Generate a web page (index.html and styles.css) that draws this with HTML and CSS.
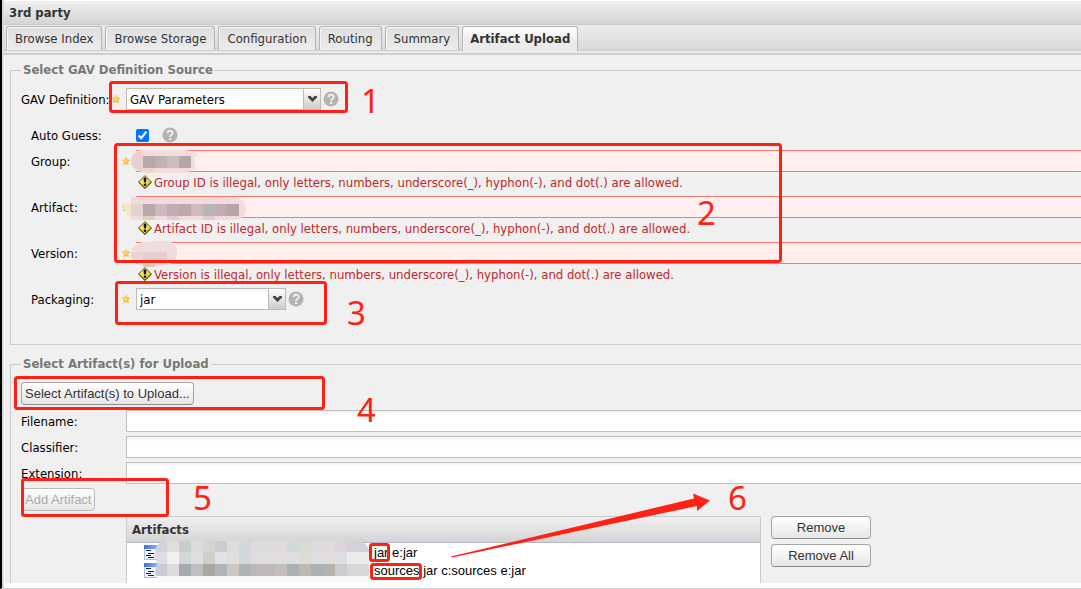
FILE: index.html
```html
<!DOCTYPE html>
<html lang="en">
<head>
<meta charset="utf-8">
<title>3rd party</title>
<link rel="stylesheet" href="styles.css">
</head>
<body>
<svg class="defs" width="0" height="0" aria-hidden="true">
  <defs>
    <linearGradient id="gold" x1="0" y1="0" x2="1" y2="1"><stop offset="0" stop-color="#fbd96b"/><stop offset="1" stop-color="#eeb028"/></linearGradient>
    <linearGradient id="yellow" x1="0" y1="0" x2="1" y2="1"><stop offset="0" stop-color="#fffbb0"/><stop offset="1" stop-color="#d8b800"/></linearGradient>
    <linearGradient id="blue" x1="0" y1="0" x2="1" y2="0"><stop offset="0" stop-color="#3c6fe0"/><stop offset="1" stop-color="#8fb4f5"/></linearGradient>
    <symbol id="star" viewBox="0 0 8 8"><path d="M4 0 5.2 2.6 8 3 6 5 6.5 8 4 6.6 1.5 8 2 5 0 3 2.8 2.6Z" fill="url(#gold)" stroke="#f0b840" stroke-width=".4"/><path d="M4 2.2 4.7 3.7 6 4 4.8 5 4 5.4 3.2 5 2 4 3.3 3.7Z" fill="#fde58a"/></symbol>
    <symbol id="help" viewBox="0 0 16 16"><circle cx="8" cy="8" r="7.5" fill="#b3b3b3"/><path d="M5.4 6.2C5.4 2.8 10.7 3 10.7 6c0 1.7-2.6 2-2.6 4" fill="none" stroke="#eee" stroke-width="2"/><rect x="7" y="11" width="2.2" height="2" fill="#eee"/></symbol>
    <symbol id="warn" viewBox="0 0 14 14"><path d="M7 .6 13.4 7 7 13.4 .6 7Z" fill="url(#yellow)" stroke="#5f5720" stroke-width="1" stroke-linejoin="round"/><path d="M13.4 7 7 13.4 .6 7" fill="none" stroke="#4d4718" stroke-width="1"/><path d="M7 2.4c2 0 1.4 2 .8 5.2H6.2C5.600 4.400 5 2.400 7 2.400Z" fill="#111"/><circle cx="7" cy="9.800" r="1.300" fill="#111"/></symbol>
    <symbol id="file" viewBox="0 0 14 15"><path d="M0 0h14v15H0z" fill="#eef3fc"/><path d="M0 0h14v4H0z" fill="url(#blue)"/><path d="M.5 4v10.500h13V4" fill="none" stroke="#a9bde8"/><path d="M2 5.500h5M4 8.500h6M2 10.500h5M4 12.500h6" stroke="#222" stroke-width="1"/></symbol>
  </defs>
</svg>

<div class="window">
  <h1 class="title">3rd party</h1>
  <nav class="tabs" role="tablist">
    <button class="tab" role="tab">Browse Index</button>
    <button class="tab" role="tab">Browse Storage</button>
    <button class="tab" role="tab">Configuration</button>
    <button class="tab" role="tab">Routing</button>
    <button class="tab" role="tab">Summary</button>
    <button class="tab active" role="tab" aria-selected="true">Artifact Upload</button>
  </nav>
  <form class="content">
    <fieldset class="group gav">
      <legend>Select GAV Definition Source</legend>
      <div class="row source">
        <label for="gav">GAV Definition:</label>
        <svg class="star"><use href="#star"/></svg>
        <div class="field">
          <span class="combo wide"><select id="gav"><option>GAV Parameters</option></select><span class="trigger"><svg viewBox="0 0 9 6"><path d="M0 0h2.500l2 2 2-2H9v1.500L4.500 6 0 1.500Z"/></svg></span></span>
          <svg class="help"><use href="#help"/></svg>
        </div>
      </div>
      <div class="inner">
        <div class="row">
          <label for="guess">Auto Guess:</label><span></span>
          <div class="field guess"><input id="guess" type="checkbox" checked><svg class="help"><use href="#help"/></svg></div>
        </div>
        <div class="row">
          <label for="gid">Group:</label>
          <svg class="star"><use href="#star"/></svg>
          <div><input id="gid" class="text bad" type="text">
            <p class="error"><svg><use href="#warn"/></svg>Group ID is illegal, only letters, numbers, underscore(_), hyphon(-), and dot(.) are allowed.</p></div>
        </div>
        <div class="row">
          <label for="aid">Artifact:</label>
          <svg class="star"><use href="#star"/></svg>
          <div><input id="aid" class="text bad" type="text">
            <p class="error"><svg><use href="#warn"/></svg>Artifact ID is illegal, only letters, numbers, underscore(_), hyphon(-), and dot(.) are allowed.</p></div>
        </div>
        <div class="row">
          <label for="ver">Version:</label>
          <svg class="star"><use href="#star"/></svg>
          <div><input id="ver" class="text bad" type="text">
            <p class="error"><svg><use href="#warn"/></svg>Version is illegal, only letters, numbers, underscore(_), hyphon(-), and dot(.) are allowed.</p></div>
        </div>
        <div class="row">
          <label for="pack">Packaging:</label>
          <svg class="star"><use href="#star"/></svg>
          <div class="field">
            <span class="combo"><select id="pack"><option>jar</option></select><span class="trigger"><svg viewBox="0 0 9 6"><path d="M0 0h2.500l2 2 2-2H9v1.500L4.500 6 0 1.500Z"/></svg></span></span>
            <svg class="help"><use href="#help"/></svg>
          </div>
        </div>
      </div>
    </fieldset>

    <fieldset class="group upload">
      <legend>Select Artifact(s) for Upload</legend>
      <button type="button" class="btn">Select Artifact(s) to Upload...</button>
      <div class="rows">
        <div class="row"><label for="fn">Filename:</label><span></span><input id="fn" class="text" type="text"></div>
        <div class="row"><label for="cl">Classifier:</label><span></span><input id="cl" class="text" type="text"></div>
        <div class="row"><label for="ex">Extension:</label><span></span><input id="ex" class="text" type="text"></div>
      </div>
      <button type="button" class="btn" disabled>Add Artifact</button>
      <div class="list">
        <section class="panel">
          <h2>Artifacts</h2>
          <ul>
            <li><svg><use href="#file"/></svg><span class="name">jar e:jar</span></li>
            <li><svg><use href="#file"/></svg><span class="name">sources.jar c:sources e:jar</span></li>
          </ul>
        </section>
        <div class="actions">
          <button type="button" class="btn">Remove</button>
          <button type="button" class="btn">Remove All</button>
        </div>
      </div>
    </fieldset>
  </form>
</div>

<svg class="marks" width="1081" height="589" viewBox="0 0 1081 589" aria-hidden="true">
  <g>
    <path d="M143 150h42q8 1 15 6h-5v13h-4l-3 4-40 0q-16-1-16-12 0-11 11-11Z" fill="#f4dcdc"/>
    <path d="M143 151v21q-12-2-12-11t12-10Z" fill="#e8d0d2"/>
    <path d="M143 156h12v12h-12z" fill="#b8a8ac"/><path d="M155 156h12v12h-12z" fill="#bdb3b0"/><path d="M167 156h12v12h-12z" fill="#cbbdbf"/><path d="M179 156h12v12h-12z" fill="#b5a6a9"/>
    <path d="M143 168h12v5q-8 0-12-3z" fill="#ead8cd"/>
    <path d="M131 197h101q14 1 14 12t-14 11H131Z" fill="#f3dadb"/>
    <path d="M131 203v14h-2q-5-4-6-14z" fill="#f3e7c8"/><path d="M131 204h12v12h-12z" fill="#e6d1d2"/>
    <path d="M143 204h12v12h-12z" fill="#b8a8ac"/><path d="M155 204h12v12h-12z" fill="#cbbac4"/><path d="M167 204h12v12h-12z" fill="#c0adb0"/><path d="M179 204h12v12h-12z" fill="#bda9ac"/><path d="M191 204h12v12h-12z" fill="#d0bbb8"/><path d="M203 204h12v12h-12z" fill="#b6b6b9"/><path d="M215 204h12v12h-12z" fill="#c4abb1"/><path d="M227 204h12v12h-12z" fill="#b5a6a9"/>
    <path d="M143 216h12v4h-12z" fill="#e0cfba"/><path d="M167 216h12v4h-12zM203 216h12v4h-12z" fill="#e9c9cd"/>
    <path d="M143 242q9 0 13-1 21-3 21 12 0 11-12 12l-10 2q-24-1-24-12t12-13Z" fill="#f1dcdd"/>
    <path d="M143 252h24v12h-24z" fill="#e4cdcc"/><path d="M131 252h12v12q-9-1-12-8z" fill="#ecd3d4"/><path d="M143 264h12v3h-12z" fill="#d4cfb4"/>
  </g>
  <clipPath id="smudge"><path d="M163 541h195q11 2 11 12v30H160l-5-10 2-9-2-12q1-8 8-11Z"/></clipPath>
  <g clip-path="url(#smudge)">
    <path d="M155 541h214v42H155z" fill="#dcdcdc"/>
    <path d="M155 541h12v11h-12zM347 541h22v11h-22z" fill="#d0d2dc"/><path d="M167 541h12v11h-12z" fill="#dfdedb"/><path d="M179 541h12v11h-12z" fill="#c6cdcf"/><path d="M203 541h12v11h-12z" fill="#d6d5d1"/><path d="M215 541h12v11h-12z" fill="#cbccd2"/><path d="M239 541h12v11h-12zM287 541h12v11h-12z" fill="#d0d8dc"/><path d="M275 541h12v11h-12z" fill="#e0dada"/><path d="M299 541h12v11h-12z" fill="#d9dad0"/><path d="M335 541h12v11h-12z" fill="#dcd4d8"/>
    <path d="M155 552h214v12H155z" fill="#dedede"/><path d="M155 552h12v12h-12z" fill="#dcdde4"/><path d="M167 552h12v12h-12z" fill="#f0f0ee"/><path d="M179 552h12v12h-12zM239 552h12v12h-12z" fill="#d2d7d8"/><path d="M203 552h12v12h-12z" fill="#cfcfca"/><path d="M215 552h12v12h-12z" fill="#dfe3e3"/><path d="M299 552h12v12h-12z" fill="#dcddd4"/><path d="M323 552h12v12h-12z" fill="#e2dcda"/><path d="M347 552h22v12h-22z" fill="#ececee"/>
    <path d="M155 564h12v12h-12z" fill="#cacbd7"/><path d="M167 564h12v12h-12z" fill="#dedcda"/><path d="M179 564h12v12h-12z" fill="#a4acae"/><path d="M191 564h12v12h-12z" fill="#bfbec0"/><path d="M203 564h12v12h-12z" fill="#a9a7a1"/><path d="M215 564h12v12h-12z" fill="#b0b4b8"/><path d="M227 564h12v12h-12z" fill="#cdc9c2"/><path d="M239 564h12v12h-12z" fill="#adb4b8"/><path d="M251 564h24v12h-24z" fill="#bcb8ba"/><path d="M275 564h12v12h-12z" fill="#c6beb9"/><path d="M287 564h12v12h-12z" fill="#abb0b7"/><path d="M299 564h12v12h-12z" fill="#bcbbad"/><path d="M311 564h12v12h-12z" fill="#aab3b2"/><path d="M323 564h12v12h-12z" fill="#b6b3ae"/><path d="M335 564h12v12h-12z" fill="#cec9d2"/><path d="M347 564h22v12h-22z" fill="#d6d7d9"/>
    <path d="M155 576h214v7H155z" fill="#f9f9f9"/>
  </g>
  <g class="frames">
    <rect x="110.500" y="82.500" width="236" height="29" rx="2"/>
    <rect x="115.500" y="144.500" width="665" height="117" rx="2"/>
    <rect x="116.500" y="282.500" width="209" height="41" rx="2"/>
    <rect x="15.500" y="377.500" width="308" height="31" rx="2"/>
    <rect x="22.500" y="479.500" width="145" height="36" rx="2"/>
    <rect x="370.500" y="544.500" width="18" height="16" rx="2"/>
    <rect x="371.500" y="564.500" width="49" height="14" rx="2"/>
  </g>
  <path d="M451 556.500 694 498.500l-1-5 17 7-13 10.500v-5L452 557.500Z" fill="#ff2114"/>
  <g class="digits">
    <text x="361" y="113">1</text><text x="697" y="225">2</text><text x="347" y="325">3</text>
    <text x="357" y="422">4</text><text x="193" y="510">5</text><text x="728" y="510">6</text>
  </g>
</svg>
</body>
</html>
```
FILE: styles.css
```css
* { box-sizing: border-box; }

body {
  margin: 0;
  overflow: hidden;
  background: #fff;
  color: #000;
  font: 13px/16px "DejaVu Sans Condensed", "Noto Sans", sans-serif;
}

input, select, button { font: inherit; margin: 0; }

.defs { position: absolute; }

.window {
  display: flex;
  flex-direction: column;
  height: 100vh;
  padding-top: 1px;
  border-left: 2px solid #000;
  border-bottom: 1px solid #d0d0d0;
  box-shadow: inset 2px 0 #d9d9d9;
  padding-left: 2px;
}

.title {
  margin: 0;
  height: 24px;
  padding: 0 5px;
  border-bottom: 1px solid #cbcbcb;
  background: linear-gradient(#f0f0f0, #d4d4d4);
  color: #333;
  font-size: 13px;
  line-height: 24px;
}

.tabs {
  display: flex;
  gap: 3px;
  height: 30px;
  padding: 1px 2px 0;
  background: linear-gradient(#ececec, #d9d9d9 25px, #cfcfcf 25px, #cfcfcf 26px, #ebebeb 26px, #ebebeb 28px, #cfcfcf 28px);
}

.tab {
  height: 24px;
  padding: 0 8px;
  border: 1px solid #b5b5b5;
  border-bottom: 0;
  border-radius: 3px 3px 0 0;
  background: linear-gradient(#dedede, #ececec);
  box-shadow: inset 1px 1px #f6f6f6;
  color: #333;
  line-height: 23px;
  white-space: nowrap;
}

.tab.active {
  height: 25px;
  padding: 0 7px 1px;
  background: linear-gradient(#fff, #ebebeb 60%);
  font-weight: bold;
}

.content {
  flex: 1;
  min-height: 0;
  overflow: hidden;
  padding: 7px 0 0 6px;
  margin-bottom: 5px;
  border-left: 1px solid #fff;
  background: #f0f0f0;
}

.group {
  min-width: 0;
  margin: 0 0 11px -1px;
  padding: 0 0 0 10px;
  border: 1px solid #cbcbcb;
  border-right: 0;
}

.group legend {
  padding: 0 2px;
  color: #777;
  font-weight: bold;
}

.gav { padding-bottom: 34px; }

.row {
  display: grid;
  grid-template-columns: 90px 15px 1fr;
  align-items: start;
}

.row label { line-height: 23px; height: 22px; white-space: nowrap; }
.star { width: 8px; height: 22px; margin-left: 1px; }
.source { margin-top: 10px; }

.inner, .rows { display: grid; gap: 4px; }
.inner { margin-top: 14px; padding-left: 10px; }
.inner .row:nth-child(n+3) { margin-top: -4px; }

.field { display: flex; align-items: center; gap: 2px; height: 22px; }
.guess { gap: 13px; }
.guess input { width: 13px; height: 13px; }
.help { width: 16px; height: 16px; }

.combo { display: flex; width: 150px; height: 22px; border: 1px solid #bbb; background: #fff; }
.combo.wide { width: 195px; }
.combo select {
  flex: 1;
  min-width: 0;
  padding: 1px 3px 0;
  border: 0;
  background: linear-gradient(#f1f3f3, #fff 4px);
  appearance: none;
}
.trigger {
  display: grid;
  place-items: center;
  width: 17px;
  border-left: 1px solid #bbb;
  background: linear-gradient(#fff, #ccc);
}
.trigger svg { width: 9px; height: 6px; fill: #444; }

.text {
  display: block;
  width: 100%;
  height: 22px;
  padding: 0 3px;
  border: 1px solid #c0c0c0;
  border-right: 0;
  border-radius: 0;
  background: linear-gradient(#f0f2f2, #fff 4px);
}
.text.bad { border-color: #ff7870; border-left: 0; background: #fee; }

.error {
  display: flex;
  align-items: center;
  gap: 2px;
  height: 24px;
  margin: 0;
  padding: 0 0 3px 2px;
  color: #c0272b;
  white-space: nowrap;
}
.error svg { width: 14px; height: 14px; margin-bottom: 2px; }

.btn {
  display: block;
  height: 23px;
  padding: 0 3px;
  border: 1px solid #a5a5a5;
  border-bottom-color: #8c8c8c;
  border-radius: 4px;
  background: linear-gradient(#fff, #e6e6e6);
  color: #333;
  font: 13px/20px "Liberation Sans", sans-serif;
  white-space: nowrap;
}
.btn:disabled { color: #aaa; border-color: #bbb; }

.upload .btn { margin-top: 10px; }
.rows { margin: 5px 0 4px; }
.upload .rows + .btn { margin-top: 4px; }

.list { display: flex; gap: 10px; margin: 5px 0 0 105px; }

.panel {
  flex: 0 1 635px;
  height: 80px;
  border: 1px solid #cbcbcb;
  background: #fff;
}
.panel h2 {
  margin: 0;
  height: 26px;
  padding: 0 5px;
  border-bottom: 1px solid #b5b8c8;
  background: linear-gradient(#f0f0f0, #d4d4d4);
  color: #333;
  font-size: 13px;
  line-height: 26px;
}
.panel ul { margin: 0; padding: 0; list-style: none; }
.panel li {
  display: flex;
  align-items: center;
  gap: 216px;
  height: 18px;
  padding: 1px 0 0 17px;
  font: 13px/18px "Liberation Sans", sans-serif;
}
.panel li svg { width: 14px; height: 15px; }

.actions { width: 100px; display: grid; gap: 5px; align-content: start; }
.upload .actions .btn { width: 100%; margin: 0; }

.marks { position: absolute; left: 0; top: 0; pointer-events: none; }
.frames { fill: none; stroke: #ff2114; stroke-width: 3px; }
.digits { fill: #ff2114; font: 33px "Noto Sans", sans-serif; }
```
